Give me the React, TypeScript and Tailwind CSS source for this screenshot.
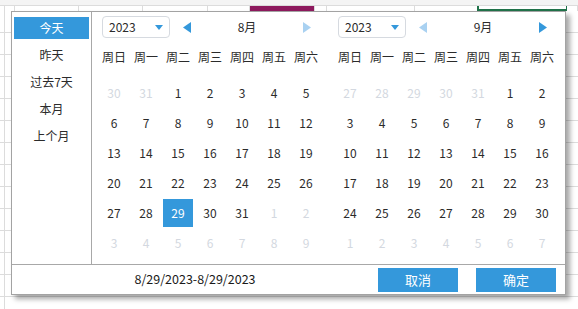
import React from "react";

type Day = { d: number; out: boolean };

const weekDays = ["周日", "周一", "周二", "周三", "周四", "周五", "周六"];
const shortcuts = ["今天", "昨天", "过去7天", "本月", "上个月"];

const getDays = (year: number, month: number): Day[] => {
  const first = new Date(year, month, 1).getDay();
  const prevLast = new Date(year, month, 0).getDate();
  const total = new Date(year, month + 1, 0).getDate();
  const days: Day[] = [];
  for (let i = first - 1; i >= 0; i--) days.push({ d: prevLast - i, out: true });
  for (let i = 1; i <= total; i++) days.push({ d: i, out: false });
  let n = 1;
  while (days.length < 42) days.push({ d: n++, out: true });
  return days;
};

const Arrow = ({ dir, light }: { dir: "left" | "right"; light: boolean }) => (
  <svg width="8" height="11" viewBox="0 0 8 11">
    <polygon
      points={dir === "left" ? "8,0 8,11 0,5.5" : "0,0 0,11 8,5.5"}
      fill={light ? "#a9d1f1" : "#3498db"}
    />
  </svg>
);

type CalProps = {
  month: number;
  prevLight: boolean;
  nextLight: boolean;
  selected?: number;
};

const Calendar = ({ month, prevLight, nextLight, selected }: CalProps) => {
  const days = getDays(2023, month - 1);
  const rows = [0, 1, 2, 3, 4, 5].map((r) => days.slice(r * 7, r * 7 + 7));
  return (
    <div className="w-[224px] flex flex-col">
      <div className="flex h-[22px] mt-[4px] items-center">
        <div className="ml-[4px] w-[68px] h-[22px] border border-[#d6dae0] rounded-[4px] flex items-center justify-between pl-[6px] pr-[6px]">
          <span>2023</span>
          <svg width="8" height="5" viewBox="0 0 8 5">
            <polygon points="0,0 8,0 4,5" fill="#3498db" />
          </svg>
        </div>
        <div className="flex-1 flex items-center justify-between pl-[13px] pr-[11px]">
          <Arrow dir="left" light={prevLight} />
          <span>{month}月</span>
          <Arrow dir="right" light={nextLight} />
        </div>
      </div>
      <div className="grid grid-cols-7 h-[24px] mt-[7px] items-center text-center">
        {weekDays.map((w) => (
          <span key={w}>{w}</span>
        ))}
      </div>
      <div className="mt-[9px] flex flex-col">
        {rows.map((row, ri) => (
          <div key={ri} className="grid grid-cols-7 h-[30px]">
            {row.map((c, ci) => {
              const isSel = !c.out && c.d === selected;
              return (
                <div key={ci} className="flex items-center justify-center">
                  <span
                    className={`w-[30px] h-[28px] flex items-center justify-center ${
                      isSel ? "bg-[#3498db] text-white" : c.out ? "text-[#d3d8e0]" : "text-[#2b2b2b]"
                    }`}
                  >
                    {c.d}
                  </span>
                </div>
              );
            })}
          </div>
        ))}
      </div>
    </div>
  );
};

const topCols = [5, 10, 64, 64, 65, 42, 65, 12, 88, 64, 88, 11];

export default function App() {
  return (
    <div
      className="relative w-[578px] h-[309px] overflow-hidden bg-white text-[12px] text-[#2b2b2b]"
      style={{ fontFamily: '"Noto Sans CJK SC", "Noto Sans", sans-serif' }}
    >
      {/* spreadsheet behind the popup */}
      <div className="flex flex-col">
        <div className="h-[5px] bg-[#f4f4f4]" />
        <div className="flex h-[6px] border-t border-[#dcdcdc]">
          {topCols.map((w, i) => (
            <div
              key={i}
              style={{ width: w }}
              className={`shrink-0 border-r ${
                i === 5 ? "border-[#dcdcdc] bg-white" : i === 6 ? "border-[#dcdcdc] bg-[#8e1a5e]" : i === 10 ? "border-b-2 border-[#21734a] border-r-[#21734a]" : "border-[#dcdcdc]"
              } ${i === 9 ? "border-r-2 border-r-[#21734a]" : ""}`}
            />
          ))}
        </div>
        {Array.from({ length: 14 }).map((_, i) => (
          <div key={i} className="flex h-[22px] border-b border-[#dcdcdc]">
            <div className="w-[5px] border-r border-[#dcdcdc]" />
          </div>
        ))}
      </div>

      {/* date range popup */}
      <div className="absolute left-[11px] top-[11px] w-[555px] h-[284px] border border-[#a3a3a3] bg-white flex flex-col shadow-[4px_4px_5px_rgba(0,0,0,0.35)]">
        <div className="flex h-[253px] border-b border-[#a8a8a8]">
          <div className="w-[80px] border-r border-[#a8a8a8] px-[2px] pt-[5px] flex flex-col gap-[5px]">
            {shortcuts.map((s, i) => (
              <div
                key={s}
                className={`h-[22px] flex items-center justify-center ${
                  i === 0 ? "bg-[#3498db] text-white" : ""
                }`}
              >
                {s}
              </div>
            ))}
          </div>
          <div className="flex pl-[6px] gap-[12px]">
            <Calendar month={8} prevLight={false} nextLight={true} selected={29} />
            <Calendar month={9} prevLight={true} nextLight={false} />
          </div>
        </div>
        <div className="flex-1 flex items-end pb-[1px]">
          <div className="flex-1 h-full flex items-center justify-center text-[12.5px] text-[#1a1a1a]">
            8/29/2023-8/29/2023
          </div>
          <div className="flex gap-[18px] pr-[9px] pb-[1px]">
            <button className="w-[80px] h-[24px] bg-[#3498db] text-white text-[13px]">取消</button>
            <button className="w-[80px] h-[24px] bg-[#3498db] text-white text-[13px]">确定</button>
          </div>
        </div>
      </div>
    </div>
  );
}
